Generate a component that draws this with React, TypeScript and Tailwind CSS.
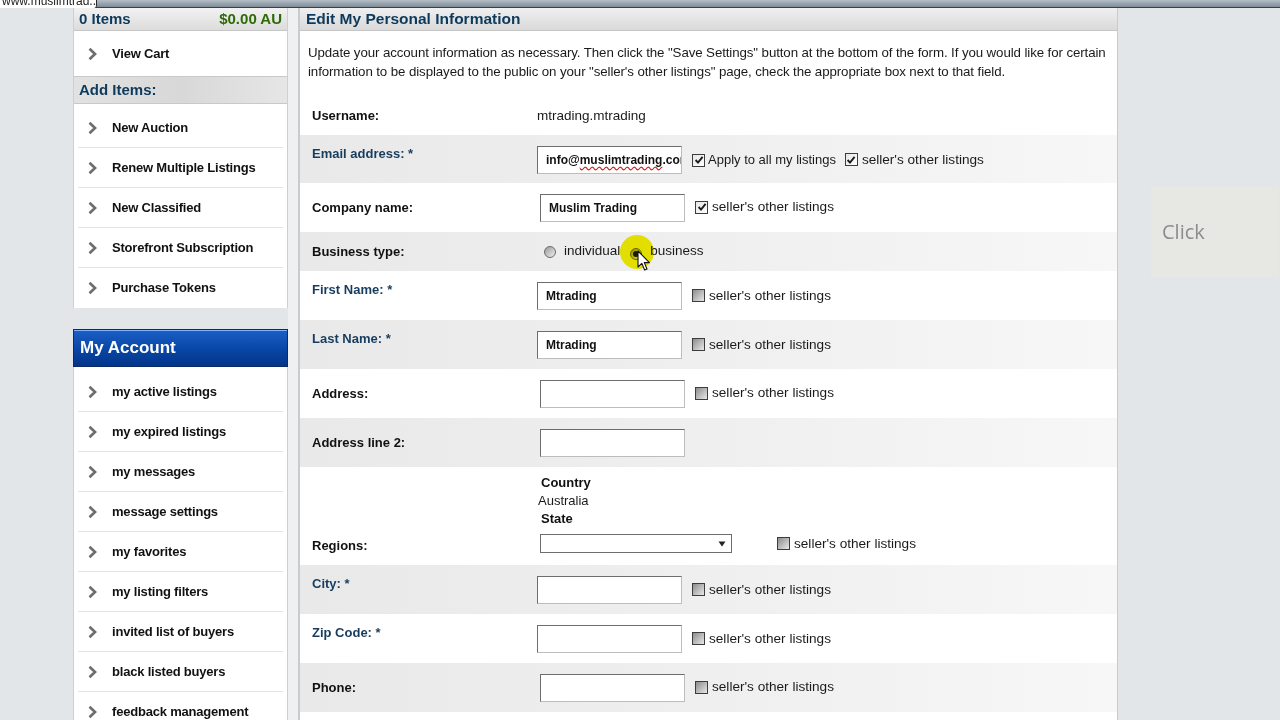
import React from "react";

const ADD_ITEMS = [
  "New Auction",
  "Renew Multiple Listings",
  "New Classified",
  "Storefront Subscription",
  "Purchase Tokens",
];

const ACCOUNT_LINKS = [
  "my active listings",
  "my expired listings",
  "my messages",
  "message settings",
  "my favorites",
  "my listing filters",
  "invited list of buyers",
  "black listed buyers",
  "feedback management",
];

function Chevron() {
  return (
    <svg width="11" height="14" viewBox="0 0 11 14" className="shrink-0">
      <path d="M2.5 1.8 L8 7 L2.5 12.2" stroke="#6e6e6e" strokeWidth="2.7" fill="none" />
    </svg>
  );
}

function SideItem({ label, last }: { label: string; last?: boolean }) {
  return (
    <div
      className={`h-[40px] shrink-0 flex items-center gap-[14px] pl-[9px] mx-[4px] ${
        last ? "" : "border-b border-[#e4e4e4]"
      }`}
    >
      <Chevron />
      <span className="text-[13px] font-bold text-[#111] tracking-[-0.2px]">{label}</span>
    </div>
  );
}

function Check({ checked }: { checked?: boolean }) {
  return (
    <span
      className={`inline-flex items-center justify-center w-[13px] h-[13px] border border-[#3d3d3d] shrink-0 ${
        checked ? "bg-gradient-to-br from-[#e6e6e6] to-white" : "bg-gradient-to-br from-[#8d8d8d] to-[#e9e9e9]"
      }`}
    >
      {checked && (
        <svg viewBox="0 0 10 10" className="w-[10px] h-[10px]">
          <path d="M1.6 5 L4 7.6 L8.6 1.8" stroke="#1b1b1b" strokeWidth="1.9" fill="none" />
        </svg>
      )}
    </span>
  );
}

function Radio({ on }: { on?: boolean }) {
  return (
    <span className="inline-flex items-center justify-center w-[12px] h-[12px] rounded-full border border-[#6a6a6a] bg-gradient-to-br from-[#9a9a9a] to-[#f0f0f0] shrink-0">
      {on && <span className="w-[6px] h-[6px] rounded-full bg-[#1e1e1e]" />}
    </span>
  );
}

function TextBox({ value, shift, wavy }: { value?: string; shift?: boolean; wavy?: boolean }) {
  return (
    <div
      className={`w-[145px] h-[28px] border border-[#6d6d6d] border-r-[#bdbdbd] border-b-[#bdbdbd] bg-white overflow-hidden whitespace-nowrap flex items-center pl-[8px] text-[12px] font-bold text-[#111] ${
        shift ? "ml-[3px]" : ""
      }`}
    >
      {wavy ? (
        <span>
          info@
          <span className="underline decoration-wavy decoration-[#d21b1b] underline-offset-2">muslimtrading</span>
          .com.au
        </span>
      ) : (
        value
      )}
    </div>
  );
}

function Sellers({ checked, gap }: { checked?: boolean; gap: string }) {
  return (
    <div className={`flex items-center gap-[4px] ${gap}`}>
      <Check checked={checked} />
      <span className="text-[13.6px] text-[#1a1a1a] whitespace-nowrap">seller's other listings</span>
    </div>
  );
}

function Row({
  label,
  req,
  gray,
  h,
  mode,
  children,
}: {
  label: string;
  req?: boolean;
  gray?: boolean;
  h: string;
  mode?: "top" | "bottom";
  children?: React.ReactNode;
}) {
  const align = mode === "top" ? "items-start pt-[11px]" : mode === "bottom" ? "items-end pb-[11px]" : "items-center";
  return (
    <div
      className={`flex shrink-0 ${h} ${align} ${
        gray ? "bg-gradient-to-r from-[#e9e9e9] via-[#efefef] to-[#f7f7f7]" : "bg-white"
      }`}
    >
      <div
        className={`w-[237px] pl-[12px] leading-[16px] text-[13px] font-bold shrink-0 ${
          req ? "text-[#163c5e]" : "text-[#111]"
        }`}
      >
        {label}
      </div>
      <div className="flex items-center">{children}</div>
    </div>
  );
}

export default function App() {
  return (
    <div className="relative w-[1280px] h-[720px] overflow-hidden bg-[#e3e6e8] font-['Liberation_Sans',Arial,sans-serif]">
      {/* browser status strip */}
      <div className="h-[8px] flex bg-gradient-to-b from-[#b4bec6] to-[#7f8c97] border-b border-[#3c3f44]">
        <div className="w-[97px] h-[8px] overflow-hidden bg-white border-r border-[#2a2a2a] rounded-br-[3px]">
          <div className="-mt-[6px] pl-[2px] text-[12px] leading-[14px] text-[#222] whitespace-nowrap">
            www.muslimtrad...
          </div>
        </div>
      </div>

      <div className="flex pl-[73px] h-[712px]">
        {/* Sidebar */}
        <div className="w-[215px] shrink-0 flex flex-col">
          <div className="shrink-0 border-l border-r border-[#cfcfcf] bg-white">
            <div className="h-[23px] flex items-center justify-between px-[5px] bg-gradient-to-b from-[#f2f2f2] to-[#dcdcdc] border-b border-[#c6c6c6]">
              <span className="text-[15px] font-bold text-[#0d3a5c]">0 Items</span>
              <span className="text-[15px] font-bold text-[#2d6b06]">$0.00 AU</span>
            </div>
            <div className="pt-[3px]">
              <SideItem label="View Cart" last />
            </div>
            <div className="h-[28px] mt-[2px] flex items-center pl-[5px] bg-gradient-to-r from-[#e2e2e2] via-[#d8d8d8] to-[#e6e6e6] border-t border-b border-[#c9c9c9]">
              <span className="text-[15px] font-bold text-[#0d3a5c]">Add Items:</span>
            </div>
            <div className="pt-[4px]">
              {ADD_ITEMS.map((l, i) => (
                <SideItem key={l} label={l} last={i === ADD_ITEMS.length - 1} />
              ))}
            </div>
          </div>

          <div className="shrink-0 mt-[21px] h-[38px] flex items-center pl-[6px] bg-gradient-to-b from-[#1c5fc6] via-[#0a47a8] to-[#02358a] border border-[#0c2a66] shadow-[inset_0_1px_0_#7fb2ff]">
            <span className="text-[17px] font-bold text-white">My Account</span>
          </div>
          <div className="shrink-0 border-l border-r border-[#cfcfcf] bg-white pt-[5px] pb-[20px]">
            {ACCOUNT_LINKS.map((l) => (
              <SideItem key={l} label={l} />
            ))}
          </div>
        </div>

        {/* gutter */}
        <div className="w-[12px] shrink-0 bg-[#eef0f1] border-r-[2px] border-[#c9cccf]" />

        {/* Main panel */}
        <div className="w-[818px] shrink-0 bg-white border-r border-[#c9cccf] flex flex-col">
          <div className="h-[23px] shrink-0 flex items-center pl-[6px] bg-gradient-to-b from-[#f0f0f0] to-[#d9d9d9] border-b border-[#c6c6c6]">
            <span className="text-[15.5px] font-bold text-[#0d3a5c]">Edit My Personal Information</span>
          </div>
          <div className="h-[66px] shrink-0 pt-[12px] pl-[8px] pr-[1px] text-[13.3px] leading-[19px] text-[#1a1a1a] tracking-[-0.1px]">
            Update your account information as necessary. Then click the "Save Settings" button at the bottom of the
            form. If you would like for certain information to be displayed to the public on your "seller's other
            listings" page, check the appropriate box next to that field.
          </div>

          <Row label="Username:" h="h-[38px]">
            <span className="text-[13.5px] text-[#1a1a1a]">mtrading.mtrading</span>
          </Row>

          <Row label="Email address: *" req gray h="h-[48px]" mode="top">
            <TextBox wavy />
            <div className="flex items-center gap-[3px] ml-[10px]">
              <Check checked />
              <span className="text-[13px] text-[#1a1a1a] whitespace-nowrap">Apply to all my listings</span>
            </div>
            <Sellers checked gap="ml-[9px]" />
          </Row>

          <Row label="Company name:" h="h-[49px]">
            <TextBox value="Muslim Trading" shift />
            <Sellers checked gap="ml-[10px]" />
          </Row>

          <Row label="Business type:" gray h="h-[39px]">
            <div className="flex items-center ml-[7px]">
              <Radio />
              <span className="ml-[8px] text-[13.5px] text-[#1a1a1a]">individual</span>
              <span className="ml-[10px]">
                <Radio on />
              </span>
              <span className="ml-[8px] text-[13.5px] text-[#1a1a1a]">business</span>
            </div>
          </Row>

          <Row label="First Name: *" req h="h-[49px]" mode="top">
            <TextBox value="Mtrading" />
            <Sellers gap="ml-[10px]" />
          </Row>

          <Row label="Last Name: *" req gray h="h-[49px]" mode="top">
            <TextBox value="Mtrading" />
            <Sellers gap="ml-[10px]" />
          </Row>

          <Row label="Address:" h="h-[49px]">
            <TextBox shift />
            <Sellers gap="ml-[10px]" />
          </Row>

          <Row label="Address line 2:" gray h="h-[49px]">
            <TextBox shift />
          </Row>

          <Row label="Regions:" h="h-[98px]" mode="bottom">
            <div className="flex flex-col">
              <span className="pl-[4px] text-[13px] font-bold leading-[19px] text-[#111]">Country</span>
              <span className="pl-[1px] text-[13px] leading-[18px] text-[#1a1a1a]">Australia</span>
              <span className="pl-[4px] text-[13px] font-bold leading-[18px] text-[#111]">State</span>
              <div className="flex items-center mt-[6px]">
                <div className="ml-[3px] w-[192px] h-[19px] border border-[#6d6d6d] bg-white flex items-center justify-end pr-[5px]">
                  <svg width="8" height="6" viewBox="0 0 8 6">
                    <path d="M0.5 0.5 L7.5 0.5 L4 5.5 Z" fill="#222" />
                  </svg>
                </div>
                <Sellers gap="ml-[45px]" />
              </div>
            </div>
          </Row>

          <Row label="City: *" req gray h="h-[49px]" mode="top">
            <TextBox />
            <Sellers gap="ml-[10px]" />
          </Row>

          <Row label="Zip Code: *" req h="h-[49px]" mode="top">
            <TextBox />
            <Sellers gap="ml-[10px]" />
          </Row>

          <Row label="Phone:" gray h="h-[49px]">
            <TextBox shift />
            <Sellers gap="ml-[10px]" />
          </Row>

          <div className="flex-1 bg-white" />
        </div>

        {/* right side */}
        <div className="flex-1 pl-[33px] pt-[179px]">
          <div className="w-[128px] h-[90px] bg-[#e7e8e4] flex items-center pl-[11px]">
            <span className="text-[20px] text-[#8b8d8e] font-['Open_Sans',sans-serif]">Click</span>
          </div>
        </div>
      </div>

      {/* cursor highlight */}
      <div className="absolute left-[620px] top-[235px] w-[34px] h-[34px] rounded-full bg-[#f3ee00] mix-blend-multiply" />
      <svg className="absolute left-[637px] top-[250px]" width="14" height="22" viewBox="0 0 14 22">
        <path
          d="M1 1 L1 17 L4.8 13.4 L7.6 20 L10 19 L7.3 12.6 L12.4 12.6 Z"
          fill="white"
          stroke="#111"
          strokeWidth="1.1"
          strokeLinejoin="round"
        />
      </svg>
    </div>
  );
}
